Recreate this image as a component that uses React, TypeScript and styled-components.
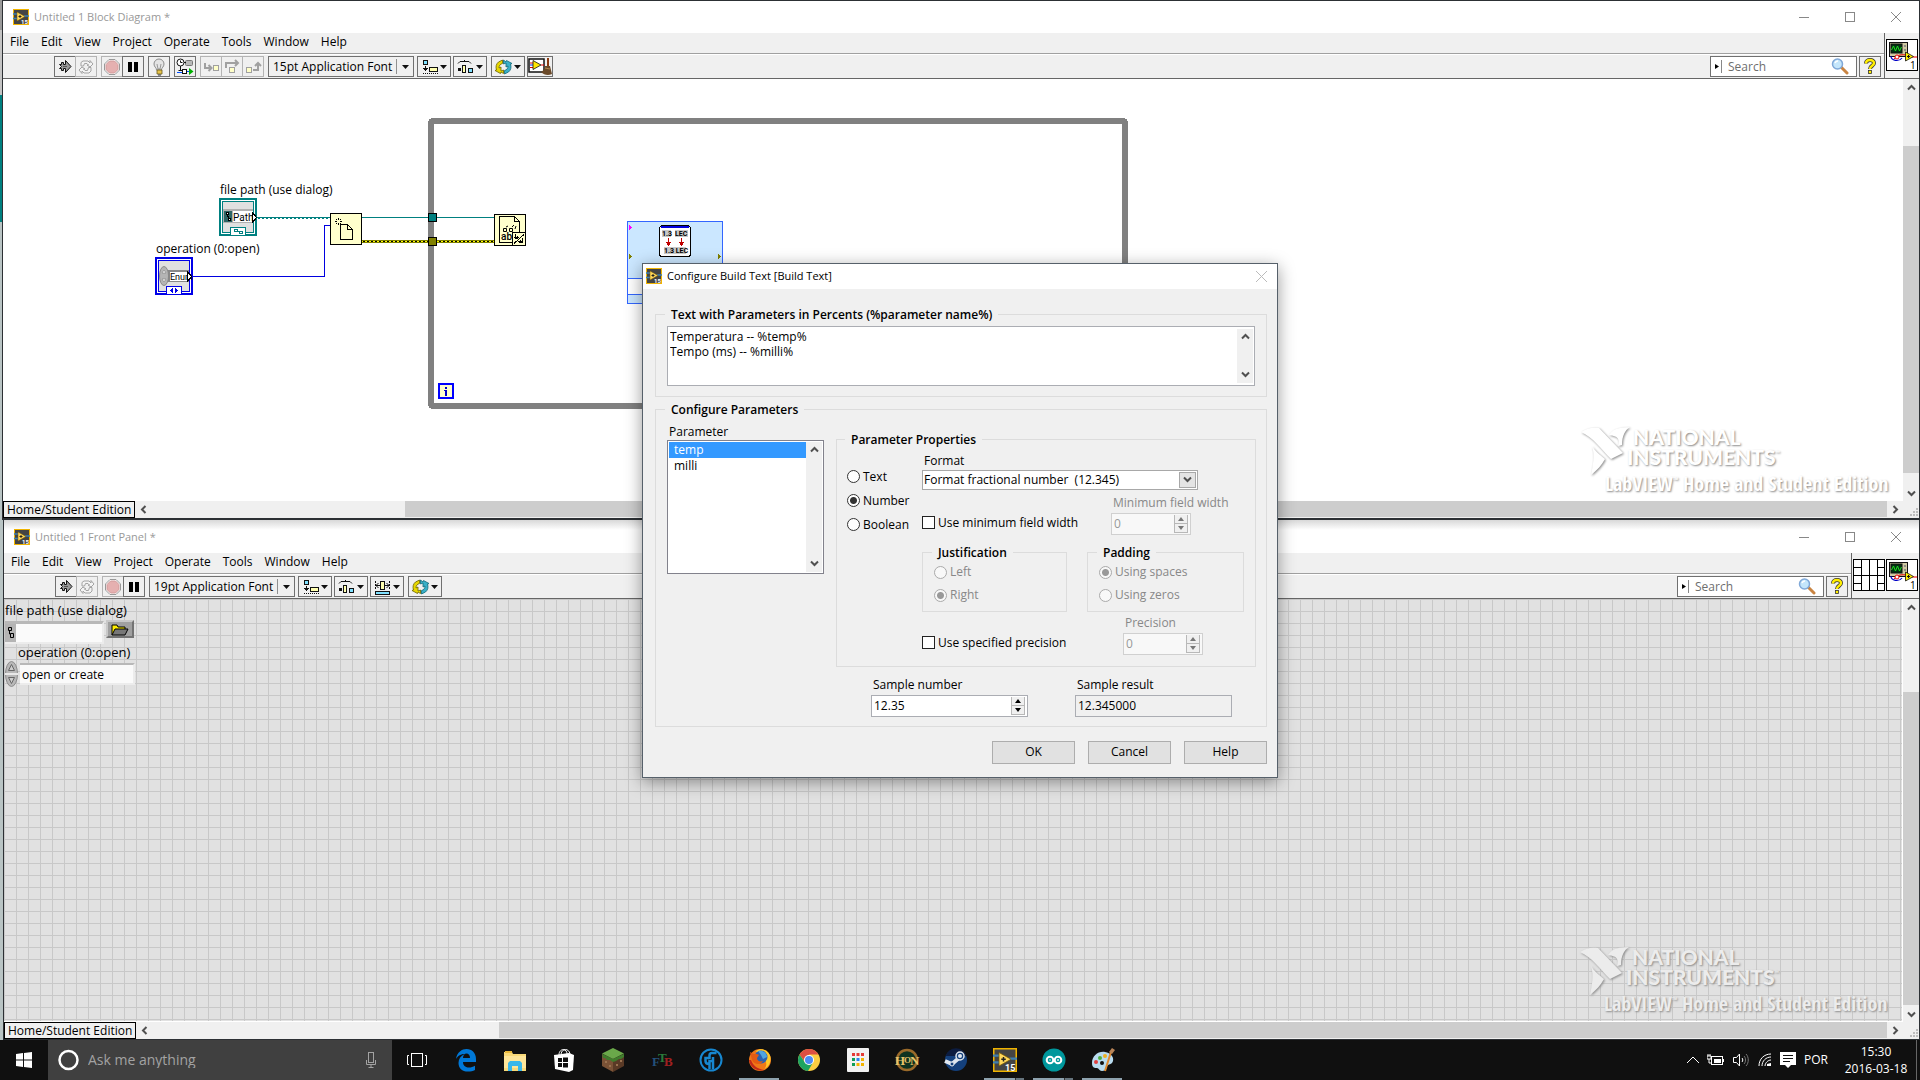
import React from "react";
import styled, { createGlobalStyle } from "styled-components";

const ui = `"Open Sans", "Noto Sans", sans-serif`;

const Global = createGlobalStyle`
  *, *::before, *::after { box-sizing: border-box; }
  body { margin: 0; background: #101010; font: 12px/16px ${ui}; color: #000; }
  button, input, select, textarea { font: inherit; color: inherit; margin: 0; }
`;

const Screen = styled.div`
  display: flex;
  flex-direction: column;
  height: 100vh;
  overflow: hidden;
`;

const Desktop = styled.main`
  position: relative;
  flex: 1;
  min-height: 0;
  display: grid;
  grid-template-rows: 1fr 1fr;
  background: linear-gradient(#9a9a9a 0 30px, #c4c4c4 30px 95px, #008080 95px 222px, #b9c4c4 222px);
`;

/* ---------- window chrome ---------- */

const Win = styled.section<{ $front?: boolean }>`
  display: flex;
  flex-direction: column;
  min-height: 0;
  min-width: 0;
  margin-left: ${(p) => (p.$front ? 3 : 2)}px;
  background: #f0f0f0;
  border: solid #2c3034;
  border-width: ${(p) => (p.$front ? "0 1px 1px 1px" : "1px 1px 2px 1px")};
`;

const TitleBar = styled.header<{ $front?: boolean }>`
  display: flex;
  align-items: center;
  gap: 5px;
  height: ${(p) => (p.$front ? 33 : 32)}px;
  padding: 0 15px 0 10px;
  background: ${(p) => (p.$front ? "linear-gradient(#d8d8d8, #fff 10px)" : "#fff")};
  color: #999;
`;

const Title = styled.h1`
  flex: 1;
  margin: 0;
  font: inherit;
  font-size: 11px;
`;

const WinButtons = styled.div`
  display: flex;
  gap: 30px;
`;

const PlainButton = styled.button`
  display: flex;
  align-items: center;
  justify-content: center;
  padding: 0;
  border: 0;
  background: none;
`;

const Head = styled.div`
  display: flex;
  border-bottom: 1px solid #666;
`;

const Bars = styled.div`
  flex: 1;
  min-width: 0;
`;

const MenuBar = styled.nav`
  display: flex;
  gap: 12px;
  height: 21px;
  padding: 0 7px;
  border-bottom: 1px solid #a0a0a0;
`;

const MenuItem = styled.button`
  height: 17px;
  padding: 0;
  border: 0;
  background: none;
`;

const ToolBar = styled.div`
  display: flex;
  align-items: center;
  gap: 2px;
  height: 24px;
  padding: 0 3px 0 51px;
  border-top: 1px solid #fff;
`;

const Group = styled.div`
  display: flex;
  margin-right: 2px;
  > * + * { margin-left: -1px; }
`;

const Apart = styled.div`
  margin-left: 2px;
`;

const Tool = styled.button<{ $w?: number; $dim?: boolean }>`
  display: flex;
  align-items: center;
  justify-content: center;
  gap: 2px;
  width: ${(p) => p.$w || 22}px;
  height: 21px;
  padding: 0;
  background: #f0f0f0;
  border: 1px solid ${(p) => (p.$dim ? "#b4b4b4" : "#707070")};
`;

const FontBox = styled.div`
  display: flex;
  align-items: center;
  width: 146px;
  height: 21px;
  margin-right: 1px;
  border: 1px solid #707070;
`;

const FontSelect = styled.select`
  flex: 1;
  min-width: 0;
  height: 19px;
  padding: 0 0 0 4px;
  appearance: none;
  border: 0;
  background: none;
`;

const FontArrow = styled.span`
  display: flex;
  align-items: center;
  justify-content: center;
  width: 17px;
  height: 15px;
  border-left: 1px solid #909090;
`;

const Spring = styled.div`
  flex: 1;
`;

const SearchBox = styled.label`
  display: flex;
  align-items: center;
  width: 147px;
  height: 21px;
  padding: 0 7px 0 3px;
  border: 1px solid #707070;
  background: #fff;
`;

const SearchInput = styled.input`
  flex: 1;
  min-width: 0;
  height: 19px;
  margin-left: 3px;
  padding: 0 2px;
  border: 0;
  background: none;
  &::placeholder { color: #6e6e6e; opacity: 1; }
`;

const IconPane = styled.div`
  display: flex;
  gap: 1px;
  align-items: flex-start;
  padding: 6px 1px 0 1px;
  border-left: 1px solid #666;
`;

/* ---------- canvases and scroll bars ---------- */

const Middle = styled.div`
  flex: 1;
  min-height: 0;
  display: flex;
`;

const Canvas = styled.div<{ $grid?: boolean }>`
  position: relative;
  flex: 1;
  min-width: 0;
  overflow: hidden;
  background-color: ${(p) => (p.$grid ? "#e1e1e1" : "#fff")};
  ${(p) =>
    p.$grid &&
    `background-image: linear-gradient(#c8c8c8 1px, transparent 1px), linear-gradient(90deg, #c8c8c8 1px, transparent 1px);
     background-size: 12px 12px;
     border-right: 1px solid #fff;
     border-bottom: 1px solid #fff;`}
`;

const VBar = styled.div`
  display: flex;
  flex-direction: column;
  width: 16px;
  background: #f0f0f0;
`;

const HBar = styled.div`
  flex: 1;
  display: flex;
  height: 16px;
  background: #f0f0f0;
`;

const ScrollButton = styled(PlainButton)`
  width: 16px;
  height: 16px;
`;

const Track = styled.div`
  flex: 1;
  display: flex;
  flex-direction: inherit;
`;

const Gap = styled.div<{ $size: number }>`
  flex: 0 0 ${(p) => p.$size}%;
`;

const Thumb = styled.div<{ $size: number }>`
  flex: 0 0 ${(p) => p.$size}%;
  background: #cdcdcd;
`;

const Foot = styled.footer`
  display: flex;
  height: 17px;
`;

const Edition = styled.div`
  height: 17px;
  padding: 0 3px;
  border: 1px solid #000;
  line-height: 15px;
  white-space: nowrap;
`;

const Corner = styled.div`
  width: 16px;
  display: flex;
  align-items: flex-end;
  justify-content: flex-end;
`;

const Watermark = styled.div<{ $ink: string }>`
  position: absolute;
  right: 8px;
  bottom: 7px;
  width: 290px;
  color: ${(p) => p.$ink};
  text-shadow: 1px 1px 2px #8c8c8c;
  font-weight: 700;
  white-space: nowrap;
`;

const MarkTop = styled.div`
  display: flex;
  gap: 1px;
  margin-left: -25px;
  height: 48px;
`;

const MarkName = styled.div`
  font: 900 21px/20px Lato, sans-serif;
  padding-top: 1px;
  div + div { margin-left: -6px; }
  sup { font-size: 6px; line-height: 0; vertical-align: 10px; }
`;

const MarkEdition = styled.div`
  font: 700 20px/20px "Liberation Sans Narrow", "Open Sans Condensed", Roboto, sans-serif;
  sup { font-size: 8px; line-height: 0; vertical-align: 8px; }
`;

/* ---------- icons ---------- */

const Down = () => (
  <svg width="7" height="4" viewBox="0 0 7 4"><path d="M0 0h7L3.500 4z" fill="#111" /></svg>
);

const Chevron = ({ turn = 0, color = "#505050" }: { turn?: number; color?: string }) => (
  <svg width="9" height="9" viewBox="0 0 9 9">
    <path d="M1 6.500L4.500 3L8 6.500" transform={`rotate(${turn} 4.500 4.500)`} fill="none" stroke={color} strokeWidth="2" />
  </svg>
);

const LvIcon = ({ size = 16 }: { size?: number }) => (
  <svg width={size} height={size} viewBox="0 0 16 16">
    <rect x="0.5" y="0.5" width="15" height="15" fill="#444" stroke="#f0b400" />
    <path d="M0 5h4M0 9.500h4M11 7h5" stroke="#3d7fb0" strokeWidth="1.500" />
    <path d="M4 3v9l8-4.500z" fill="#ffd75a" stroke="#7a5a00" strokeWidth=".5" />
    <path d="M5.500 7.500h3M7 6v3" stroke="#222" />
    <text x="8" y="15" fontSize="6" fontWeight="700" fontFamily="Roboto, sans-serif" fill="#fff">15</text>
  </svg>
);

const RunIcon = () => (
  <svg width="14" height="15" viewBox="0 0 14 15">
    <path d="M1.500 5.500H3.500V3.500H5.500V5.500H7.500V1.500L13 7.500L7.500 13.500V9.500H5.500V11.500H3.500V9.500H1.500L3.500 7.500Z" fill="#9a9a9a" stroke="#111" />
    <path d="M5 7.500h4" stroke="#555" />
  </svg>
);

const LoopIcon = () => (
  <svg width="16" height="16" viewBox="0 0 16 16" fill="#f4f4f4" stroke="#a3a3a3">
    <path d="M3 7V3.500L5 2h5l2 2V1.500L15 5l-3 3-3-2h1.500L9 4.500H6.500L5.500 7z" />
    <path d="M13 8.500V12l-2 2H6l-2-2v2.500L1 11l3-3 3 2H5.500L7 11.500h2.500l1-3z" />
  </svg>
);

const StopIcon = () => (
  <svg width="16" height="16" viewBox="0 0 16 16">
    <path d="M5 .5h6L15.500 5v6L11 15.500H5L.5 11V5z" fill="#fff" stroke="#999" />
    <path d="M5.500 2h5L14 5.500v5L10.500 14h-5L2 10.500v-5z" fill="#e5b0b0" stroke="#d09a9a" />
  </svg>
);

const PauseIcon = () => (
  <svg width="10" height="10" viewBox="0 0 10 10"><path d="M0 0h4v10H0zM6 0h4v10H6z" /></svg>
);

const BulbIcon = () => (
  <svg width="12" height="18" viewBox="0 0 12 18">
    <path d="M6 1a5 5 0 0 1 5 5c0 3-2.500 3.500-2.500 6h-5C3.500 9.500 1 9 1 6a5 5 0 0 1 5-5z" fill="#e4e4e4" stroke="#8c8c8c" />
    <path d="M4 6l1 5h2l1-5" fill="none" stroke="#999" />
    <path d="M4 12h5v4H4z" fill="#e6c34a" stroke="#6b5a20" strokeWidth=".8" />
    <path d="M5 17h3" stroke="#333" />
  </svg>
);

const RetainIcon = () => (
  <svg width="18" height="17" viewBox="0 0 18 17">
    <rect x="9.500" y="2.500" width="7" height="5" rx="1" fill="#b8b8b8" stroke="#777" />
    <circle cx="4.500" cy="4.500" r="3.500" fill="#fff" stroke="#111" />
    <path d="M4.500 2.500v2h2M4.500 8v5M2.500 12.500h4M8 4.500h2" stroke="#111" fill="none" />
    <path d="M1 14.500h5M11 13.500h2" stroke="#0050ff" />
    <rect x="6.500" y="11.500" width="4" height="4" fill="#fff" stroke="#111" />
    <path d="M13 10l4.500 3.500L13 17z" fill="#00b000" />
  </svg>
);

const StepIcon = ({ kind }: { kind: number }) => (
  <svg width="17" height="16" viewBox="0 0 17 16" fill="none" stroke="#a0a0a0" strokeWidth="2">
    {kind === 0 && <path d="M2 4v5h6M5.500 6l3 3-3 3" />}
    {kind === 1 && <path d="M2 9V4h11M11 1l3 3-3 3" />}
    {kind === 2 && <path d="M8 11h5V4M10 7l3-3 3 3" />}
    <rect x={kind === 0 ? 10.5 : kind === 1 ? 5.5 : 1.5} y={kind === 0 ? 6.5 : 8.5} width="5" height="5" fill="#ffffc8" strokeWidth="1" />
  </svg>
);

const AlignIcon = () => (
  <svg width="16" height="16" viewBox="0 0 16 16" shapeRendering="crispEdges">
    <rect x="1.500" y="1.500" width="4" height="4" fill="#7fe0ff" stroke="#111" />
    <rect x="7.500" y="8.500" width="8" height="4" fill="#ffffb0" stroke="#111" />
    <path d="M3.500 7v5M2 10.500h3M1 9.500h5" stroke="#111" fill="none" />
    <path d="M1 14.500h15" stroke="#111" strokeDasharray="1 1" />
  </svg>
);

const SpreadIcon = () => (
  <svg width="17" height="16" viewBox="0 0 17 16">
    <path d="M1 4.500l2-2h9l2 2M7.500 1v2" stroke="#111" fill="none" />
    <path d="M1 9h3v3H1z" fill="#111" />
    <rect x="5.500" y="6.500" width="3" height="7" fill="#ffffb0" stroke="#111" />
    <rect x="11.500" y="9.500" width="4" height="4" fill="#7fe0ff" stroke="#111" />
  </svg>
);

const ResizeIcon = () => (
  <svg width="17" height="16" viewBox="0 0 17 16">
    <path d="M1.500 2v9M15.500 2v9" stroke="#111" strokeDasharray="2 1" />
    <path d="M2 6.500h4M11 6.500h4M4.500 4L2 6.500 4.500 9M12.500 4L15 6.500 12.500 9" stroke="#111" fill="none" />
    <rect x="6.500" y="2.500" width="4" height="8" fill="#ffffb0" stroke="#111" />
    <rect x="1.500" y="12.500" width="14" height="3" fill="#7fe0ff" stroke="#111" />
  </svg>
);

const ReorderIcon = () => (
  <svg width="17" height="16" viewBox="0 0 17 16" strokeWidth=".8">
    <path d="M7.500 1L3.500 3C1 5 .5 8 1.500 11L0 11.500l5.500 3 .5-1.500 2.500 1.500V11L6 12V8L4 9C4 7 5 5 7.500 4.500z" fill="#e8d800" stroke="#6a6200" />
    <path d="M9.500 15l4-2c2.500-2 3-5 2-8L17 4.500l-5.500-3L11 3 8.500 1v4L11 4v4l2-1c0 2-1 4-3.500 4.500z" fill="#38b0c8" stroke="#106878" />
  </svg>
);

const CleanIcon = () => (
  <svg width="24" height="19" viewBox="0 0 24 19">
    <rect x="1" y="2" width="15" height="13" fill="#fff" stroke="#111" strokeWidth="1.500" />
    <path d="M2 6h3M2 10.500h3" stroke="#e00000" />
    <path d="M2 8h3" stroke="#0030e0" />
    <path d="M5 3.500v9l8-4.500z" fill="#ffe600" stroke="#111" strokeWidth=".8" />
    <path d="M13 8h3" stroke="#e00000" />
    <path d="M19 1h2v9h-2z" fill="#8a3a10" />
    <path d="M17 9h5l2 8c-4 2-8 1-11-2 2-1 4-3 4-6z" fill="#6b4a2a" />
    <path d="M17 11l5 1" stroke="#b08850" />
  </svg>
);

const Magnifier = () => (
  <svg width="18" height="17" viewBox="0 0 18 17">
    <path d="M10 9l6 6" stroke="#c98442" strokeWidth="3" strokeLinecap="round" />
    <circle cx="6.500" cy="6" r="5" fill="#c4e6fb" stroke="#7fa8d8" strokeWidth="1.500" />
    <path d="M4 5a3 3 0 0 1 3-2" stroke="#fff" strokeWidth="1.500" fill="none" />
  </svg>
);

const HelpIcon = () => (
  <svg width="12" height="17" viewBox="0 0 12 17">
    <path d="M2 5.500C2 1 10 1 10 5c0 3-4 2.500-4 6" fill="none" stroke="#333" strokeWidth="4" />
    <path d="M2 5.500C2 1 10 1 10 5c0 3-4 2.500-4 6" fill="none" stroke="#ffee00" strokeWidth="2.500" />
    <rect x="4.500" y="12.500" width="3" height="3" fill="#ffee00" stroke="#333" strokeWidth=".8" />
  </svg>
);

const ViIcon = () => (
  <svg width="32" height="32" viewBox="0 0 32 32">
    <rect x="0.5" y="0.5" width="31" height="31" fill="#fff" stroke="#000" />
    <rect x="3.500" y="3.500" width="18" height="14" fill="#cfc9a2" stroke="#111" />
    <rect x="5" y="5" width="11" height="9" fill="#031" stroke="#111" />
    <path d="M5.500 11l2-4 2 5 2-5 2 5 2-4" fill="none" stroke="#1ee01e" />
    <circle cx="19" cy="7" r="1" fill="#777" /><circle cx="19" cy="11" r="1" fill="#777" />
    <path d="M5 17c0 5 8 6 11 2" fill="none" stroke="#0000c8" strokeWidth="1.200" />
    <path d="M8 20c2-3 6-5 12-4M26 18h5" fill="none" stroke="#f00000" />
    <circle cx="11" cy="18" r="2" fill="#fff" stroke="#f00000" />
    <path d="M19.500 13v9l8-4.500z" fill="#ffee00" stroke="#111" strokeWidth=".8" />
    <path d="M21 17.500h3M22.500 16v3" stroke="#111" />
    <text x="24" y="30" fontSize="10" fontFamily="Open Sans, sans-serif">1</text>
  </svg>
);

const PanesIcon = () => (
  <svg width="32" height="32" viewBox="0 0 32 32" shapeRendering="crispEdges">
    <rect x="0.5" y="0.5" width="31" height="31" fill="#fff" stroke="#000" />
    <path d="M8.500 0v32M16.500 0v32M24.500 0v32M0 16.500h32M0 8.500h8M0 24.500h8M24 8.500h8M24 24.500h8" stroke="#000" />
  </svg>
);

const Grip = () => (
  <svg width="10" height="10" viewBox="0 0 10 10" fill="#bdbdbd">
    <path d="M7 0h2v2H7zM7 3h2v2H7zM4 3h2v2H4zM7 6h2v2H7zM4 6h2v2H4zM1 6h2v2H1z" />
  </svg>
);

const EagleSvg = styled.svg`
  filter: drop-shadow(1px 1px 1px #8c8c8c);
`;

const Eagle = ({ ink }: { ink: string }) => (
  <EagleSvg width="52" height="52" viewBox="0 0 52 52">
    <path d="M1 6C7 2 12 1 19 2l24 25-12 6C20 22 14 12 1 6z" fill={ink} />
    <path d="M29 9c5-8 12-7 21-8-5 3-8 9-8 18l-4 1c2-7 0-10-9-11z" fill={ink} />
    <path d="M12 20c2 4 8 9 13 13-3 6-8 11-14 16 2-10 4-20 1-29z" fill={ink} />
  </EagleSvg>
);

/* ---------- block diagram ---------- */

const DiagramSvg = styled.svg`
  position: absolute;
  left: 0;
  top: 0;
`;

const Label = styled.label<{ $x: number; $y: number; $big?: boolean }>`
  position: absolute;
  left: ${(p) => p.$x}px;
  top: ${(p) => p.$y}px;
  font-size: ${(p) => (p.$big ? 13 : 12)}px;
  white-space: nowrap;
`;

const Diagram = () => (
  <DiagramSvg width="1140" height="340" viewBox="3 79 1140 340" shapeRendering="crispEdges">
    <rect x="431" y="121" width="694" height="285" rx="2" fill="none" stroke="#808080" strokeWidth="6" />
    <path d="M257 217.500H330" stroke="#008080" strokeWidth="1" />
    <path d="M258 218.500H330" stroke="#008080" strokeWidth="1" strokeDasharray="2 2" />
    <path d="M362 217.500H494" stroke="#008080" />
    <path d="M193 276.500H324.500V225.500H330" stroke="#0000e0" fill="none" />
    <path d="M362 241.500H494" stroke="#808000" strokeWidth="3" />
    <path d="M362 241.500H494" stroke="#ffff00" />
    <path d="M363 241.500H494" stroke="#000" strokeDasharray="2 2" />
    <rect x="428.500" y="213.500" width="8" height="8" fill="#008080" stroke="#000" />
    <rect x="428.500" y="237.500" width="8" height="8" fill="#808000" stroke="#000" />

    <g>
      <rect x="220" y="199" width="36" height="36" fill="#fff" stroke="#008080" strokeWidth="2" />
      <rect x="222.500" y="201.500" width="31" height="31" fill="#e0e0e0" stroke="#008080" />
      <rect x="223" y="209" width="30" height="14" fill="#b0b0b0" />
      <rect x="224" y="211" width="8" height="11" fill="#2d6464" />
      <rect x="233" y="211" width="20" height="11" fill="#fff" />
      <path d="M226.500 212.500h2v2h-2zM228.500 218.500h2v2h-2zM227.500 215l1 3" fill="#fff" stroke="#000" />
      <text x="233" y="221" fontSize="10" fontFamily="Roboto, sans-serif">Path</text>
      <path d="M252.500 212.500v10l4-5z" fill="#fff" stroke="#000" />
      <rect x="230.500" y="227.500" width="15" height="8" fill="#fff" stroke="#008080" />
      <path d="M234.500 229.500h3v2h-3zM239.500 231.500h3v2h-3zM237 231.500h3" fill="none" stroke="#008080" />
    </g>

    <g>
      <rect x="156" y="258" width="36" height="36" fill="#fff" stroke="#0000e8" strokeWidth="2" />
      <rect x="158.500" y="260.500" width="31" height="31" fill="#e0e0e0" stroke="#0000e8" />
      <g shapeRendering="auto">
        <ellipse cx="164" cy="276" rx="4.500" ry="9.500" fill="#b4b4b4" stroke="#8a8a8a" />
        <path d="M162 273l2-3 2 3zM162 279l2 3 2-3z" fill="#eee" stroke="#777" strokeWidth=".5" />
      </g>
      <rect x="168" y="270" width="21" height="12" fill="#888" />
      <rect x="170" y="272" width="19" height="9" fill="#fff" />
      <text x="170" y="280" fontSize="9" fontFamily="Roboto, sans-serif">Enum</text>
      <path d="M187.500 271.500v10l4-5z" fill="#fff" stroke="#000" />
      <rect x="166.500" y="286.500" width="15" height="8" fill="#fff" stroke="#0000e8" />
      <path d="M170 290.500l3-3v6zM178 290.500l-3-3v6z" fill="#0000e8" />
    </g>

    <g stroke="#000">
      <rect x="330.500" y="213.500" width="31" height="31" fill="#ffffcc" />
      <path d="M340.500 224.500h7l5 5v10h-12zM347.500 224.500v5h5" fill="#ffffcc" />
      <path d="M335 221.500h2M340 221.500h2M338.500 218v2M338.500 223v2M336 219l1 1M341 219l-1 1M336 224l1-1M341 224l-1-1" />
    </g>

    <g stroke="#000">
      <rect x="494.500" y="214.500" width="31" height="31" fill="#ffffcc" />
      <path d="M499.500 216.500h15l5 5v21h-20zM514.500 216.500v5h5" fill="#ffffcc" />
      <path d="M503.500 228.500h3v3h-3zM509.500 228.500h3v3h-3zM506 227l2-1M512 227l2-2M515 229l1-3" fill="none" shapeRendering="auto" />
      <text x="501" y="240" fontSize="10" fontWeight="500" stroke="none" fontFamily="Roboto, sans-serif">ab</text>
      <rect x="512.500" y="232.500" width="13" height="13" fill="#ffffcc" />
      <path d="M515.500 234v5M517.500 236v3M514 237.500h5M515 238.500h2M514 243.500l10-9M522.500 238v5M520.500 240v3M518 241.500h5M519 242.500h4" />
    </g>

    <rect x="439" y="384" width="14" height="14" fill="#ffffcc" stroke="#0000ff" strokeWidth="2" />
    <path d="M445 387h2v2h-2zM445 390h2v6h-2zM444 390h1v1h-1z" fill="#0000c8" />

    <g>
      <rect x="627.500" y="221.500" width="95" height="82" fill="#cbe7ff" stroke="#3366ff" />
      <rect x="627.500" y="278.500" width="95" height="16" fill="#fff" stroke="#3366ff" />
      <path d="M629 225v5l3-2.500z" fill="#ff00ff" />
      <path d="M629 254v5l3-2.500zM718 254v5l3-2.500z" fill="#808000" />
      <rect x="659.500" y="225.500" width="31" height="31" rx="3" fill="#fff" stroke="#000" />
      <path d="M661 226h28v2h-28z" fill="#0000e0" />
      <path d="M662 230h9v7h-9zM675 230h13v7h-13zM664 247h22v7h-22z" fill="#c8c8c8" />
      <g fontSize="7" fontWeight="700" fontFamily="Roboto, sans-serif">
        <text x="662" y="236">1.3</text>
        <text x="675" y="236">LEC</text>
        <text x="664" y="253">1.3 LEC</text>
      </g>
      <path d="M668.500 238v5M681.500 238v5M666 242h5l-2.500 3zM679 242h5l-2.500 3z" fill="#c00000" stroke="#c00000" />
    </g>
  </DiagramSvg>
);

/* ---------- front panel controls ---------- */

const PathField = styled.div`
  position: absolute;
  left: 1px;
  top: 22px;
  display: flex;
  width: 99px;
  height: 23px;
  border: solid #b0b0b0;
  border-width: 3px 2px 2px 0;
  border-color: #b8b8b8 #ececec #ececec #b8b8b8;
`;

const PathMark = styled.span`
  width: 11px;
  background: #b4b4b4;
`;

const PanelInput = styled.input`
  flex: 1;
  min-width: 0;
  padding: 0 2px;
  border: 0;
  background: #fafafa;
`;

const BrowseButton = styled.button`
  position: absolute;
  left: 102px;
  top: 21px;
  width: 28px;
  height: 18px;
  padding: 0;
  border: 2px outset #c8c8c8;
  background: #a0a0a0;
  line-height: 0;
`;

const RingField = styled.div`
  position: absolute;
  left: 1px;
  top: 62px;
  display: flex;
  align-items: center;
  gap: 2px;
  height: 26px;
`;

const RingInput = styled(PanelInput)`
  flex: none;
  width: 115px;
  height: 22px;
  border: solid;
  border-width: 2px 2px 2px 0;
  border-color: #b8b8b8 #ececec #ececec #b8b8b8;
`;

/* ---------- dialog ---------- */

const Overlay = styled.div`
  position: absolute;
  inset: 0;
  display: grid;
  place-items: center;
`;

const Dialog = styled.form`
  width: 636px;
  border: 1px solid #56606a;
  background: #f0f0f0;
  box-shadow: 0 4px 16px rgba(0, 0, 0, 0.4);
`;

const DialogTitle = styled.header`
  display: flex;
  align-items: center;
  gap: 5px;
  height: 25px;
  padding: 0 10px 0 3px;
  background: #fff;
`;

const DialogBody = styled.div`
  display: flex;
  flex-direction: column;
  padding: 18px 10px 13px 12px;
`;

const Fieldset = styled.fieldset`
  min-width: 0;
  margin: 0;
  padding: 3px 11px 10px;
  border: 1px solid #dcdcdc;
`;

const Legend = styled.legend`
  margin-left: -2px;
  padding: 0 6px;
  font-weight: 600;
`;

const TextFrame = styled.div`
  display: flex;
  height: 60px;
  padding: 2px 1px 2px 2px;
  border: 1px solid #abadb3;
  background: #fff;
`;

const TextArea = styled.textarea`
  flex: 1;
  padding: 0;
  border: 0;
  background: none;
  line-height: 15px;
  resize: none;
  overflow: hidden;
  outline: 0;
`;

const MiniBar = styled.div`
  display: flex;
  flex-direction: column;
  justify-content: space-between;
  width: 16px;
  background: #f0f0f0;
`;

const Params = styled(Fieldset)`
  display: grid;
  grid-template-columns: 157px 1fr;
  column-gap: 12px;
  margin-top: 5px;
  padding: 6px 11px 9px;
`;

const Column = styled.div`
  display: flex;
  flex-direction: column;
`;

const Caption = styled.label<{ $dim?: boolean }>`
  padding-left: 2px;
  white-space: nowrap;
  color: ${(p) => (p.$dim ? "#888" : "#000")};
`;

const ListFrame = styled.div`
  display: flex;
  height: 134px;
  padding: 1px;
  border: 1px solid #82828c;
  background: #fff;
`;

const List = styled.ul`
  flex: 1;
  margin: 0;
  padding: 0;
  list-style: none;
`;

const Item = styled.li`
  padding-left: 5px;
  &[aria-selected="true"] { background: #3399ff; color: #fff; }
`;

const Props = styled(Fieldset)`
  display: grid;
  grid-template-columns: 75px 1fr;
  margin-top: 8px;
  padding: 5px 11px 11px 10px;
`;

const Radios = styled.div<{ $top?: number; $row: number }>`
  display: grid;
  grid-auto-rows: ${(p) => p.$row}px;
  align-items: center;
  align-content: start;
  padding-top: ${(p) => p.$top || 0}px;
`;

const Choice = styled.label<{ $dim?: boolean }>`
  display: flex;
  align-items: center;
  gap: 3px;
  white-space: nowrap;
  color: ${(p) => (p.$dim ? "#888" : "#000")};
`;

const Radio = styled.input`
  appearance: none;
  width: 13px;
  height: 13px;
  border: 1px solid #333;
  border-radius: 50%;
  background: #fff;
  &:checked { background: radial-gradient(circle, #333 3px, #fff 4px); }
  &:disabled { border-color: #aaa; background: #f8f8f8; }
  &:disabled:checked { background: radial-gradient(circle, #999 3px, #f8f8f8 4px); }
`;

const Check = styled.input`
  appearance: none;
  width: 13px;
  height: 13px;
  border: 1px solid #222;
  background: #fff;
`;

const SelectFrame = styled.div`
  display: flex;
  width: 276px;
  height: 20px;
  margin-top: 1px;
  padding: 1px;
  border: 1px solid #a8a8a8;
  background: #fff;
`;

const FormatSelect = styled.select`
  flex: 1;
  min-width: 0;
  padding: 0;
  appearance: none;
  border: 0;
  background: none;
`;

const SelectArrow = styled.span`
  display: flex;
  align-items: center;
  justify-content: center;
  width: 17px;
  border: 1px solid #a8a8a8;
  background: #e4e4e4;
`;

const OptionRow = styled.div<{ $indent: number; $gap: number }>`
  display: grid;
  grid-template-columns: ${(p) => p.$indent}px auto;
  align-items: end;
  justify-content: start;
  margin-top: ${(p) => p.$gap}px;
  > label { margin-bottom: 4px; }
`;

const Pair = styled.div`
  display: grid;
  grid-template-columns: 145px 157px;
  gap: 20px;
  margin-top: 10px;
`;

const SmallSet = styled(Fieldset)`
  padding: 0 11px 4px;
`;

const NumberFrame = styled.div<{ $w: number; $dim?: boolean }>`
  display: flex;
  width: ${(p) => p.$w}px;
  height: 22px;
  margin-top: 2px;
  padding: 1px 2px;
  border: 1px solid ${(p) => (p.$dim ? "#d0d0d0" : "#abadb3")};
  background: ${(p) => (p.$dim ? "#f8f8f8" : "#fff")};
`;

const NumberInput = styled.input`
  flex: 1;
  min-width: 0;
  padding: 0;
  border: 0;
  background: none;
  &:disabled { color: #999; }
`;

const Spin = styled.span`
  display: grid;
  grid-template-rows: 1fr 1fr;
  width: 14px;
`;

const SpinButton = styled(PlainButton)`
  border: solid #b8b8b8;
  border-width: 0 1px 1px;
  background: #f0f0f0;
`;

const Result = styled.output`
  width: 157px;
  height: 22px;
  margin-top: 2px;
  padding: 2px;
  border: 1px solid #abadb3;
`;

const Samples = styled.div`
  display: flex;
  gap: 47px;
  margin: 10px 0 0 35px;
`;

const Actions = styled.div`
  display: flex;
  justify-content: flex-end;
  gap: 13px;
  margin-top: 14px;
`;

const Action = styled.button`
  width: 83px;
  height: 23px;
  padding: 0;
  border: 1px solid #adadad;
  background: #e1e1e1;
`;

/* ---------- taskbar ---------- */

const TaskBar = styled.footer`
  display: flex;
  height: 40px;
  background: #101010;
  color: #fff;
`;

const Start = styled(PlainButton)`
  width: 48px;
`;

const Ask = styled.label`
  display: flex;
  align-items: center;
  width: 344px;
  padding: 0 15px 0 9px;
  background: #404040;
`;

const AskInput = styled.input`
  flex: 1;
  min-width: 0;
  padding: 0 8px;
  border: 0;
  background: none;
  font-size: 14px;
  &::placeholder { color: #a3a3a3; opacity: 1; }
`;

const AppButton = styled(PlainButton)<{ $open?: boolean; $many?: boolean }>`
  position: relative;
  width: 49px;
  &::after {
    content: "";
    position: absolute;
    left: 4px;
    right: 5px;
    bottom: 0;
    height: 2px;
    background: ${(p) =>
      p.$many ? "linear-gradient(90deg, #8ea2ae 31px, #333 31px 32px, #66747d 32px)" : p.$open ? "#8ea2ae" : "none"};
  }
`;

const Tray = styled.div`
  display: flex;
  align-items: center;
  gap: 8px;
  margin-left: auto;
`;

const Clock = styled.time`
  width: 80px;
  text-align: center;
  line-height: 17px;
`;

const ShowDesktop = styled(PlainButton)`
  width: 4px;
  height: 40px;
  border-left: 1px solid #666;
`;

const S = ({ children, w = 24, h = 24 }: { children: React.ReactNode; w?: number; h?: number }) => (
  <svg width={w} height={h} viewBox={`0 0 ${w} ${h}`}>{children}</svg>
);

const apps: { name: string; open?: boolean; many?: boolean; art: React.ReactNode }[] = [
  { name: "Task View", art: <S><g fill="none" stroke="#fff"><rect x="6.500" y="5.500" width="11" height="13" /><path d="M4 7.500H2.500v9H4M20 7.500h1.500v9H20" /></g></S> },
  { name: "Edge", art: <S><path d="M2 11C3 4 8 1 12.500 1 18 1 22 5 22 11v3H9c0 4 3 5.500 6 5.500 2 0 4-.6 6-1.800V22c-2 1.200-4.500 1.600-7 1.600C8 23.600 4.500 20 4.500 15c0-4 2-7 6-9C6 6 3.500 8.500 2 11zm7-1h7c0-3-1.500-4.500-3.500-4.500S9 7.500 9 10z" fill="#0078d7" /></S> },
  { name: "File Explorer", art: <S><path d="M1 4h8l1 2h13v17H1z" fill="#f9d978" /><path d="M2 3h7v2H2z" fill="#eab83a" /><path d="M1 8h22v12H1z" fill="#ffe699" /><path d="M5 23v-8l2-2h10l2 2v8h-4v-5H9v5z" fill="#3ab7ea" /></S> },
  { name: "Store", art: <S><path d="M2 7l15-2 5 2-1 15-4 2L3 21z" fill="#fff" /><path d="M7 7c0-7 8-7 8-1M9 6c1-6 8-6 9 0" fill="none" stroke="#fff" /><path d="M6 10h4v4H6zM11 9.500h5V14h-5zM6 15h4v4H6zM11 15h5v4.500h-5z" fill="#101010" /></S> },
  { name: "Minecraft", art: <S><path d="M1 6l11 5v13L1 18z" fill="#7a5236" /><path d="M23 6l-11 5v13l11-6z" fill="#5a3a26" /><path d="M12 0l11 5.500L12 11 1 5.500z" fill="#6aa84a" /><path d="M1 6l11 5 11-5v3l-3 2-2 0-3 2-3 1-3-2-3 0-2-2-2 0z" fill="#3f7d2c" /><path d="M4 13h2v2H4zM8 17h2v2H8zM15 16h2v2h-2zM19 12h2v2h-2z" fill="#9a7250" /></S> },
  { name: "FTB", art: <S><g fontFamily="Liberation Serif, serif" fontSize="13" fontWeight="700"><text x="2" y="18" fill="#24507a">F</text><text x="8" y="14" fill="#2a7a3a">T</text><text x="14" y="18" fill="#a02020">B</text></g></S> },
  { name: "Guild", art: <S><circle cx="12" cy="12" r="10.500" fill="none" stroke="#1787d0" strokeWidth="2" /><path d="M17.500 5H13c-2 0-2.500 1-2.500 2.500V11M10 10H6.500v3c0 2 1 3 3.500 3M14 9v12M10.500 21v-8H14" fill="none" stroke="#1787d0" strokeWidth="2.500" /></S> },
  { name: "Firefox", open: true, art: <S><circle cx="12" cy="12" r="11" fill="#f07818" /><path d="M8 3c5-4 13-1 14.500 6 .5 6-2 10-6 12 3-4 2-8-1-9z" fill="#ffca28" /><circle cx="13" cy="9" r="6.500" fill="#2a62b0" /><path d="M10 3c5-1 9 2 9 6l-4 2-2-4z" fill="#4fa5e0" /><path d="M2 4c2 1 3 2 5 2 2 0 3 0 4 1l-2 3c0 3 3 4 6 3-2 4-9 4-11-1z" fill="#e55b12" /><path d="M1 12c1 8 9 12 15 10-6-1-11-4-13-10z" fill="#c22a1a" /></S> },
  { name: "Chrome", art: <S><circle cx="12" cy="12" r="11" fill="#fbcd41" /><path d="M2.500 6.500A11 11 0 0 1 21.500 6.500H12L8 14z" fill="#dd4f43" /><path d="M2.500 6.500A11 11 0 0 0 11 23l5-8.500H8z" fill="#1da462" /><circle cx="12" cy="12" r="5" fill="#fff" /><circle cx="12" cy="12" r="4" fill="#4c8bf5" /></S> },
  { name: "App Launcher", art: <S><rect x="1" y="0" width="22" height="24" rx="1" fill="#f2f2f2" /><path d="M6 5h3v3H6zM10.500 5h3v3h-3zM15 5h3v3h-3z" fill="#e53a35" /><path d="M6 10h3v3H6zM6 15h3v3H6z" fill="#0f9d58" /><path d="M10.500 10h3v3h-3z" fill="#2a84f0" /><path d="M10.500 15h3v3h-3zM15 10h3v3h-3zM15 15h3v3h-3z" fill="#f4b400" /></S> },
  { name: "Heroes of Newerth", art: <S w={26}><circle cx="13" cy="12" r="10" fill="#0f3320" stroke="#9a6a2a" strokeWidth="2.500" /><text x="1" y="17" fontSize="13" fontWeight="700" fontFamily="Liberation Serif, serif" fill="#e8c46a">H</text><text x="10" y="15" fontSize="9" fontWeight="700" fontFamily="Liberation Serif, serif" fill="#e8c46a">O</text><text x="16" y="17" fontSize="13" fontWeight="700" fontFamily="Liberation Serif, serif" fill="#e8c46a">N</text></S> },
  { name: "Steam", art: <S><circle cx="12" cy="12" r="11" fill="#14407c" /><path d="M1.500 8A11 11 0 0 1 22.500 8z" fill="#0c1c40" /><path d="M1 13l7 3 7-6" stroke="#dfe6ee" strokeWidth="4" fill="none" /><circle cx="16" cy="8" r="4" fill="#14407c" stroke="#dfe6ee" strokeWidth="1.500" /><circle cx="16" cy="8" r="2" fill="#dfe6ee" /><circle cx="8" cy="16" r="2" fill="#14407c" stroke="#dfe6ee" /></S> },
  { name: "LabVIEW", many: true, art: <LvIcon size={24} /> },
  { name: "Arduino", many: true, art: <S><circle cx="12" cy="12" r="11.500" fill="#00979c" /><g fill="none" stroke="#fff" strokeWidth="2"><circle cx="8" cy="12" r="3.300" /><circle cx="16" cy="12" r="3.300" /></g><path d="M7 12h2M15 12h2M16 11v2" stroke="#fff" strokeWidth=".8" /></S> },
  { name: "Paint", open: true, art: <S><path d="M1 15C1 8 7 3 14 4c6 1 9 5 8 9-1 4-5 3-6 5s0 5-5 5c-3 0-3-3-5-3s-5 0-5-5z" fill="#b9dcf0" /><circle cx="5" cy="14" r="2" fill="#e04040" /><circle cx="9" cy="10" r="2" fill="#50b040" /><circle cx="14" cy="8" r="2" fill="#f0b020" /><circle cx="11" cy="15" r="2" fill="#101010" /><path d="M14 23L20 4" stroke="#e08a30" strokeWidth="2" /><path d="M18 4l3-4 3 2-3 4z" fill="#b88458" /></S> },
];

/* ---------- assembled parts ---------- */

const ScrollV = ({ gap, size }: { gap: number; size: number }) => (
  <VBar>
    <ScrollButton type="button" aria-label="Scroll up"><Chevron /></ScrollButton>
    <Track><Gap $size={gap} /><Thumb $size={size} /></Track>
    <ScrollButton type="button" aria-label="Scroll down"><Chevron turn={180} /></ScrollButton>
  </VBar>
);

const MiniScroll = () => (
  <MiniBar>
    <ScrollButton type="button" aria-label="Scroll up"><Chevron /></ScrollButton>
    <ScrollButton type="button" aria-label="Scroll down"><Chevron turn={180} /></ScrollButton>
  </MiniBar>
);

const Spinner = ({ dim }: { dim?: boolean }) => (
  <Spin>
    {["M0 4h6L3 0z", "M0 0h6L3 4z"].map((d, i) => (
      <SpinButton key={d} type="button" disabled={dim} aria-label={i ? "Decrease" : "Increase"}>
        <svg width="6" height="4" viewBox="0 0 6 4"><path d={d} fill={dim ? "#777" : "#000"} /></svg>
      </SpinButton>
    ))}
  </Spin>
);

const Mark = ({ ink }: { ink: string }) => (
  <Watermark $ink={ink}>
    <MarkTop>
      <Eagle ink={ink} />
      <MarkName><div>NATIONAL</div><div>INSTRUMENTS<sup>™</sup></div></MarkName>
    </MarkTop>
    <MarkEdition>LabVIEW<sup>™</sup> Home and Student Edition</MarkEdition>
  </Watermark>
);

type FrameProps = {
  title: string; font: string; front?: boolean; tools: React.ReactNode; after: React.ReactNode;
  panes: React.ReactNode; v: [number, number]; h: [number, number]; children: React.ReactNode;
};

const Frame = ({ title, font, front, tools, after, panes, v, h, children }: FrameProps) => (
  <Win $front={front}>
    <TitleBar $front={front}>
      <LvIcon />
      <Title>{title}</Title>
      <WinButtons>
        <PlainButton aria-label="Minimize"><S w={16} h={16}><path d="M3 8.500h10" stroke="#888" /></S></PlainButton>
        <PlainButton aria-label="Maximize"><S w={16} h={16}><rect x="3.500" y="3.500" width="9" height="9" fill="none" stroke="#888" /></S></PlainButton>
        <PlainButton aria-label="Close"><S w={16} h={16}><path d="M3 3l10 10M13 3L3 13" stroke="#888" /></S></PlainButton>
      </WinButtons>
    </TitleBar>
    <Head>
      <Bars>
        <MenuBar>
          {["File", "Edit", "View", "Project", "Operate", "Tools", "Window", "Help"].map((m) => <MenuItem key={m}>{m}</MenuItem>)}
        </MenuBar>
        <ToolBar>
          <Group><Tool aria-label="Run"><RunIcon /></Tool><Tool $dim aria-label="Run continuously"><LoopIcon /></Tool></Group>
          <Group><Tool $dim aria-label="Abort"><StopIcon /></Tool><Tool aria-label="Pause"><PauseIcon /></Tool></Group>
          {tools}
          <FontBox>
            <FontSelect aria-label="Font"><option>{font}</option></FontSelect>
            <FontArrow><Down /></FontArrow>
          </FontBox>
          {after}
          <Spring />
          <SearchBox>
            <svg width="9" height="13" viewBox="0 0 9 13"><path d="M1 4v5l4-2.500z" /><path d="M7.500 0v13" stroke="#888" /></svg>
            <SearchInput placeholder="Search" aria-label="Search" />
            <Magnifier />
          </SearchBox>
          <Tool aria-label="Help"><HelpIcon /></Tool>
        </ToolBar>
      </Bars>
      <IconPane>{panes}</IconPane>
    </Head>
    <Middle>
      <Canvas $grid={front}>{children}</Canvas>
      <ScrollV gap={v[0]} size={v[1]} />
    </Middle>
    <Foot>
      <Edition>Home/Student Edition</Edition>
      <HBar>
        <ScrollButton aria-label="Scroll left"><Chevron turn={-90} /></ScrollButton>
        <Track><Gap $size={h[0]} /><Thumb $size={h[1]} /></Track>
        <ScrollButton aria-label="Scroll right"><Chevron turn={90} /></ScrollButton>
      </HBar>
      <Corner><Grip /></Corner>
    </Foot>
  </Win>
);

const drop = (name: string, icon: React.ReactNode) => (
  <Tool $w={34} aria-label={name}>{icon}<Down /></Tool>
);

const BuildText = () => (
  <Dialog onSubmit={(e) => e.preventDefault()} role="dialog" aria-label="Configure Build Text">
    <DialogTitle>
      <LvIcon />
      <Title>Configure Build Text [Build Text]</Title>
      <PlainButton type="button" aria-label="Close dialog"><S w={11} h={11}><path d="M0 0l11 11M11 0L0 11" stroke="#bbb" /></S></PlainButton>
    </DialogTitle>
    <DialogBody>
      <Fieldset>
        <Legend>Text with Parameters in Percents (%parameter name%)</Legend>
        <TextFrame>
          <TextArea aria-label="Text with parameters" defaultValue={"Temperatura -- %temp%\nTempo (ms) -- %milli%"} />
          <MiniScroll />
        </TextFrame>
      </Fieldset>
      <Params>
        <Legend>Configure Parameters</Legend>
        <Column>
          <Caption as="span" id="param">Parameter</Caption>
          <ListFrame>
            <List role="listbox" aria-labelledby="param">
              <Item role="option" aria-selected="true">temp</Item>
              <Item role="option" aria-selected="false">milli</Item>
            </List>
            <MiniScroll />
          </ListFrame>
        </Column>
        <Column>
          <Props>
            <Legend>Parameter Properties</Legend>
            <Radios $row={24} $top={12}>
              {["Text", "Number", "Boolean"].map((t) => (
                <Choice key={t}><Radio type="radio" name="kind" defaultChecked={t === "Number"} />{t}</Choice>
              ))}
            </Radios>
            <Column>
              <Caption htmlFor="format">Format</Caption>
              <SelectFrame>
                <FormatSelect id="format"><option>{"Format fractional number\u00a0 (12.345)"}</option></FormatSelect>
                <SelectArrow><Chevron turn={180} /></SelectArrow>
              </SelectFrame>
              <OptionRow $indent={189} $gap={5}>
                <Choice><Check type="checkbox" />Use minimum field width</Choice>
                <Column>
                  <Caption $dim htmlFor="minw">Minimum field width</Caption>
                  <NumberFrame $w={80} $dim><NumberInput id="minw" defaultValue="0" disabled /><Spinner dim /></NumberFrame>
                </Column>
              </OptionRow>
              <Pair>
                <SmallSet>
                  <Legend>Justification</Legend>
                  <Radios $row={23}>
                    {["Left", "Right"].map((t) => (
                      <Choice $dim key={t}><Radio disabled type="radio" name="just" defaultChecked={t === "Right"} />{t}</Choice>
                    ))}
                  </Radios>
                </SmallSet>
                <SmallSet>
                  <Legend>Padding</Legend>
                  <Radios $row={23}>
                    {["Using spaces", "Using zeros"].map((t) => (
                      <Choice $dim key={t}><Radio disabled type="radio" name="pad" defaultChecked={t === "Using spaces"} />{t}</Choice>
                    ))}
                  </Radios>
                </SmallSet>
              </Pair>
              <OptionRow $indent={201} $gap={3}>
                <Choice><Check type="checkbox" />Use specified precision</Choice>
                <Column>
                  <Caption $dim htmlFor="prec">Precision</Caption>
                  <NumberFrame $w={80} $dim><NumberInput id="prec" defaultValue="0" disabled /><Spinner dim /></NumberFrame>
                </Column>
              </OptionRow>
            </Column>
          </Props>
          <Samples>
            <Column>
              <Caption htmlFor="sample">Sample number</Caption>
              <NumberFrame $w={157}><NumberInput id="sample" defaultValue="12.35" /><Spinner /></NumberFrame>
            </Column>
            <Column>
              <Caption htmlFor="result">Sample result</Caption>
              <Result id="result">12.345000</Result>
            </Column>
          </Samples>
        </Column>
      </Params>
      <Actions>
        <Action>OK</Action><Action type="button">Cancel</Action><Action type="button">Help</Action>
      </Actions>
    </DialogBody>
  </Dialog>
);

export default function App() {
  return (
    <Screen>
      <Global />
      <Desktop>
        <Frame
          title="Untitled 1 Block Diagram *"
          font="15pt Application Font"
          v={[13, 84]}
          h={[14.6, 85.4]}
          tools={
            <>
              <Group><Tool aria-label="Highlight execution"><BulbIcon /></Tool></Group>
              <Group><Tool aria-label="Retain wire values"><RetainIcon /></Tool></Group>
              <Group>{[0, 1, 2].map((k) => <Tool $dim key={k} aria-label={`Step ${k + 1}`}><StepIcon kind={k} /></Tool>)}</Group>
            </>
          }
          after={
            <>
              {drop("Align objects", <AlignIcon />)}
              {drop("Distribute objects", <SpreadIcon />)}
              <Apart>{drop("Reorder", <ReorderIcon />)}</Apart>
              <Tool $w={26} aria-label="Clean up diagram"><CleanIcon /></Tool>
            </>
          }
          panes={<ViIcon />}
        >
          <Diagram />
          <Label as="span" $x={217} $y={103}>file path (use dialog)</Label>
          <Label as="span" $x={153} $y={162}>operation (0:open)</Label>
          <Mark ink="#fff" />
        </Frame>
        <Frame
          front
          title="Untitled 1 Front Panel *"
          font="19pt Application Font"
          v={[19.8, 80]}
          h={[20, 80]}
          tools={null}
          after={
            <>
              {drop("Align objects", <AlignIcon />)}
              {drop("Distribute objects", <SpreadIcon />)}
              {drop("Resize objects", <ResizeIcon />)}
              <Apart>{drop("Reorder", <ReorderIcon />)}</Apart>
            </>
          }
          panes={<><PanesIcon /><ViIcon /></>}
        >
          <Label $x={1} $y={3} $big htmlFor="path">file path (use dialog)</Label>
          <PathField>
            <PathMark><svg width="11" height="18" viewBox="0 0 11 18"><path d="M3.500 3.500h3v3h-3zM5.500 9.500h3v4h-3zM4.500 7v3h1" fill="none" stroke="#000" /></svg></PathMark>
            <PanelInput id="path" />
          </PathField>
          <BrowseButton aria-label="Browse">
            <svg width="18" height="13" viewBox="0 0 18 13"><path d="M1 12V2h5l1 2h7v3" fill="#ffee00" stroke="#000" /><path d="M1 12l3-6h13l-3 6z" fill="#777" stroke="#000" /></svg>
          </BrowseButton>
          <Label $x={14} $y={45} $big htmlFor="op">operation (0:open)</Label>
          <RingField>
            <svg width="13" height="26" viewBox="0 0 13 26">
              <ellipse cx="6.500" cy="13" rx="6" ry="12.500" fill="#b8b8b8" stroke="#8c8c8c" />
              <path d="M0 13h13" stroke="#e8e8e8" strokeWidth="2" />
              <path d="M3.500 9.500l3-6 3 6zM3.500 16.500l3 6 3-6z" fill="#ccc" stroke="#666" />
            </svg>
            <RingInput id="op" defaultValue="open or create" />
          </RingField>
          <Mark ink="#ececec" />
        </Frame>
        <Overlay><BuildText /></Overlay>
      </Desktop>
      <TaskBar>
        <Start aria-label="Start"><S w={16} h={16}><path d="M0 2l7-1v6.500H0zM8 1l8-1v7.500H8zM0 8.500h7V15l-7-1zM8 8.500h8V16l-8-1z" fill="#fff" /></S></Start>
        <Ask>
          <S w={23} h={24}><circle cx="11.500" cy="12" r="9" fill="none" stroke="#fff" strokeWidth="2.500" /></S>
          <AskInput placeholder="Ask me anything" aria-label="Ask me anything" />
          <S w={12} h={18}><rect x="3.500" y="1.500" width="5" height="10" fill="none" stroke="#a3a3a3" /><path d="M1.500 9v4.500h9V9M6 14v2.500M3.500 16.500h5" fill="none" stroke="#a3a3a3" /></S>
        </Ask>
        {apps.map((a) => <AppButton key={a.name} aria-label={a.name} $open={a.open} $many={a.many}>{a.art}</AppButton>)}
        <Tray>
          <PlainButton aria-label="Show hidden icons"><S w={12} h={16}><path d="M0 11l6-6 6 6" fill="none" stroke="#fff" /></S></PlainButton>
          <S w={18} h={16}><rect x="4.500" y="4.500" width="11" height="8" fill="none" stroke="#fff" /><path d="M7 7h7v4H7zM16 7h1v3h-1z" fill="#fff" /><path d="M0 4h4v3H0zM1 2v2M3 2v2M2 7v4h3" fill="none" stroke="#fff" /></S>
          <S w={17} h={16}><path d="M.5 5.500h3l3-3.500v12l-3-3.500h-3z" fill="none" stroke="#fff" /><path d="M9 6c1 1 1 3 0 4" fill="none" stroke="#fff" /><path d="M11 4c2 2 2 6 0 8M13 2c3 3 3 9 0 12" fill="none" stroke="#777" /></S>
          <S w={14} h={16}><g fill="none" stroke="#fff"><path d="M1 14C1 7 6 2 13 2M4 14c0-5 4-9 9-9M7 14c0-3 3-6 6-6" /></g><path d="M9 14v-2l4-1v3z" fill="#fff" /></S>
          <S w={16} h={16}><path d="M0 0h16v13h-5l-3 3-3-3H0z" fill="#fff" /><path d="M3 3.500h10M3 6.500h10M3 9.500h7" stroke="#101010" /></S>
          <span>POR</span>
          <Clock>15:30<br />2016-03-18</Clock>
        </Tray>
        <ShowDesktop aria-label="Show desktop" />
      </TaskBar>
    </Screen>
  );
}
